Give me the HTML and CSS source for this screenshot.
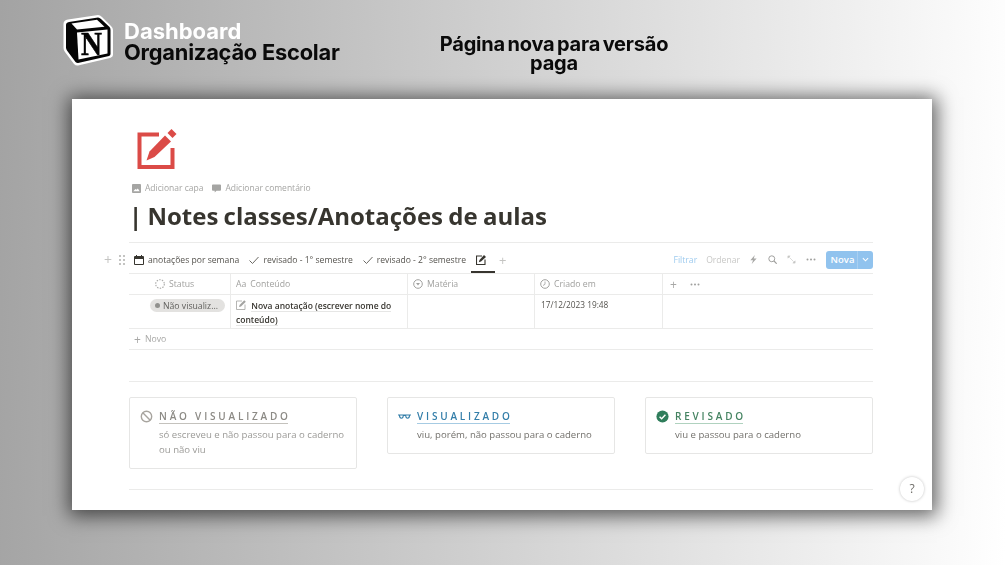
FILE: index.html
```html
<!DOCTYPE html>
<html>
  <head>
    <title>Dashboard Organização Escolar</title>
    <link rel="stylesheet" href="styles.css">
  </head>

  <body>
    <header class="top">
      <svg class="logo" viewBox="0 0 50 52">
        <path d="M5 5.500 L35 1 Q37 1 39 3 L48 12 Q50 14 50 16 V41 Q50 43 47 44 L15 51.500 Q13 52 11 50 L2 38 Q0.500 36 0.500 34 V10 Q0.500 6 5 5.500 Z" fill="#fff"/>
        <path d="M6 8 L35 3.500 Q36.500 3.500 38 5 L46.500 13 Q47.500 14 47.500 16 V40 Q47.500 41.500 46 42 L15 49 Q13.500 49 12.500 48 L4 36.500 Q3 35 3 33.500 V11 Q3 8.500 6 8 Z" fill="#050505"/>
        <path d="M8.500 9.500 L34 5.800 L41.500 12.800 L14 15.500 Z" fill="#fff"/>
        <path d="M14 18.500 L44.500 15.500 V39.500 L15.500 45.500 Z" fill="#fff"/>
        <text class="logo-n" x="28.500" y="41" text-anchor="middle" textLength="21" lengthAdjust="spacingAndGlyphs">N</text>
      </svg>
      <div class="brand">
        <div class="brand-small">Dashboard</div>
        <div class="brand-big">Organização Escolar</div>
      </div>
      <div class="notice">Página nova para versão<br>paga</div>
    </header>

    <main class="window">
      <div class="page">
        <svg class="page-icon" viewBox="0 0 40 42">
          <path d="M22 6.500 H2.500 V39 H35.500 V20" fill="none" stroke="#db4b47" stroke-width="4"/>
          <path d="M28 7.500 L34 13.500 L17.500 29 L9.500 32.500 L12.500 23.500 Z" fill="#db4b47"/>
          <path d="M30.500 5 L34.500 1 L39.500 6 L35.500 10 Z" fill="#db4b47"/>
        </svg>

        <div class="meta">
          <span class="meta-item">
            <svg class="ico-s" viewBox="0 0 10 10"><path d="M0 1 Q0 0 1 0 H9 Q10 0 10 1 V9 Q10 10 9 10 H1 Q0 10 0 9 Z M1.500 8 H8.500 L6.500 5 L5 6.500 L3.800 5.500 Z" fill="#a5a5a3" fill-rule="evenodd"/></svg>
            Adicionar capa
          </span>
          <span class="meta-item">
            <svg class="ico-s" viewBox="0 0 10 10"><path d="M1 0.500 H9 Q10 0.500 10 1.500 V6.500 Q10 7.500 9 7.500 H5 L3 9.500 V7.500 H1 Q0 7.500 0 6.500 V1.500 Q0 0.500 1 0.500 Z" fill="#a5a5a3"/></svg>
            Adicionar comentário
          </span>
        </div>

        <h1 class="title">| Notes classes/Anotações de aulas</h1>

        <div class="tabs">
          <span class="handle">+</span>
          <svg class="grip" viewBox="0 0 6 10"><g fill="#c4c4c2"><rect y="0" width="2" height="2"/><rect x="4" y="0" width="2" height="2"/><rect y="4" width="2" height="2"/><rect x="4" y="4" width="2" height="2"/><rect y="8" width="2" height="2"/><rect x="4" y="8" width="2" height="2"/></g></svg>
          <span class="tab">
            <svg class="ico" viewBox="0 0 10 10"><path d="M0 2 Q0 1 1 1 H2 V0 H3 V1 H7 V0 H8 V1 H9 Q10 1 10 2 V9 Q10 10 9 10 H1 Q0 10 0 9 Z M1 4 V9 H9 V4 Z" fill="#37352f" fill-rule="evenodd"/></svg>
            anotações por semana
          </span>
          <span class="tab">
            <svg class="ico" viewBox="0 0 10 10"><path d="M0.500 5.500 L3.500 8.500 L9.500 2" fill="none" stroke="#6b6964" stroke-width="1"/></svg>
            revisado - 1° semestre
          </span>
          <span class="tab">
            <svg class="ico" viewBox="0 0 10 10"><path d="M0.500 5.500 L3.500 8.500 L9.500 2" fill="none" stroke="#6b6964" stroke-width="1"/></svg>
            revisado - 2° semestre
          </span>
          <span class="tab tab-active">
            <svg class="ico" viewBox="0 0 10 10"><path d="M6 1 H0.500 V9.500 H9 V4.500" fill="none" stroke="#37352f" stroke-width="1.100"/><path d="M8 0 L10 2 L5 6.500 L2.800 7.200 L3.500 5 Z" fill="#37352f"/></svg>
          </span>
          <span class="tab-add">+</span>
          <div class="tools">
            <span class="filter">Filtrar</span>
            <span class="sort">Ordenar</span>
            <svg class="tool" viewBox="0 0 10 10"><path d="M6.500 0 L1.500 5.800 H4.500 L3 10 L8.500 4 H5.300 Z" fill="#a8a8a6"/></svg>
            <svg class="tool" viewBox="0 0 10 10"><circle cx="4.200" cy="4.200" r="3.300" fill="none" stroke="#a0a09e" stroke-width="1.100"/><path d="M6.700 6.700 L9.700 9.700" stroke="#a0a09e" stroke-width="1.300"/></svg>
            <svg class="tool" viewBox="0 0 10 10"><path d="M1 1 H3.500 L1 3.500 Z M9 9 H6.500 L9 6.500 Z M2.500 2.500 L7.500 7.500" fill="#c8c8c6" stroke="#c8c8c6" stroke-width="0.700"/></svg>
            <svg class="dots" viewBox="0 0 10 3"><g fill="#a0a09e"><circle cx="1.500" cy="1.500" r="1"/><circle cx="5" cy="1.500" r="1"/><circle cx="8.500" cy="1.500" r="1"/></g></svg>
            <span class="new-btn"><span class="new-label">Nova</span><svg class="new-arrow" viewBox="0 0 8 5"><path d="M1 1 L4 4 L7 1" fill="none" stroke="#fff" stroke-width="1.200"/></svg></span>
          </div>
        </div>

        <div class="table">
          <div class="row row-head">
            <div class="cell c-status">
              <svg class="ico" viewBox="0 0 10 10"><circle cx="5" cy="5" r="4.300" fill="none" stroke="#a8a8a6" stroke-width="1.100" stroke-dasharray="1.500 1.200"/></svg>
              Status
            </div>
            <div class="cell c-content"><span class="aa">Aa</span> Conteúdo</div>
            <div class="cell c-subject">
              <svg class="ico" viewBox="0 0 10 10"><circle cx="5" cy="5" r="4.300" fill="none" stroke="#a0a09e"/><path d="M3 4 H7 L5 6.500 Z" fill="#a0a09e"/></svg>
              Matéria
            </div>
            <div class="cell c-date">
              <svg class="ico" viewBox="0 0 10 10"><circle cx="5" cy="5" r="4.300" fill="none" stroke="#a0a09e"/><path d="M5 2.500 V5.300 L3 6.500" fill="none" stroke="#a0a09e" stroke-width="0.800"/></svg>
              Criado em
            </div>
            <div class="cell c-rest"><span class="rest-plus">+</span><svg class="dots" viewBox="0 0 10 3"><g fill="#a0a09e"><circle cx="1.500" cy="1.500" r="1"/><circle cx="5" cy="1.500" r="1"/><circle cx="8.500" cy="1.500" r="1"/></g></svg></div>
          </div>
          <div class="row row-item">
            <div class="cell c-status top-align"><span class="pill"><span class="pill-dot"></span>Não visualiz...</span></div>
            <div class="cell c-content top-align">
              <div class="item-text">
                <svg class="ico item-ico" viewBox="0 0 10 10"><path d="M6 1 H0.500 V9.500 H9 V4.500" fill="none" stroke="#a3a3a1" stroke-width="0.800"/><path d="M8.200 0.300 L9.800 1.800 L5 6.500 L3 7.100 L3.600 5 Z" fill="#a3a3a1"/></svg>
                <span class="item-link">Nova anotação (escrever nome do conteúdo)</span>
              </div>
            </div>
            <div class="cell c-subject"></div>
            <div class="cell c-date top-align date-value">17/12/2023 19:48</div>
            <div class="cell c-rest"></div>
          </div>
        </div>
        <div class="add-row"><span class="add-plus">+</span> Novo</div>

        <hr class="rule rule-a">

        <div class="callouts">
          <div class="callout">
            <svg class="callout-ico" viewBox="0 0 12 12"><circle cx="6" cy="6" r="4.800" fill="none" stroke="#a8a59f" stroke-width="1.300"/><path d="M2.600 2.600 L9.400 9.400" stroke="#a8a59f" stroke-width="1.300"/></svg>
            <div class="callout-body">
              <div class="label label-grey">NÃO VISUALIZADO</div>
              <p class="note note-grey">só escreveu e não passou para o caderno ou não viu</p>
            </div>
          </div>
          <div class="callout">
            <svg class="callout-ico" viewBox="0 0 14 12"><path d="M0 3.800 H14 V5 H13 Q12.800 8.500 10.300 8.500 Q8 8.500 7.800 5.500 H6.200 Q6 8.500 3.700 8.500 Q1.200 8.500 1 5 H0 Z M2.200 5 Q2.300 7.300 3.700 7.300 Q5 7.300 5.200 5 Z M8.800 5 Q9 7.300 10.300 7.300 Q11.700 7.300 11.800 5 Z" fill="#337ea9" fill-rule="evenodd"/></svg>
            <div class="callout-body">
              <div class="label label-blue">VISUALIZADO</div>
              <p class="note">viu, porém, não passou para o caderno</p>
            </div>
          </div>
          <div class="callout">
            <svg class="callout-ico" viewBox="0 0 12 12"><circle cx="6" cy="6" r="5.600" fill="#2f7d5b"/><path d="M3.300 6.200 L5.200 8 L8.700 4.300" fill="none" stroke="#fff" stroke-width="1.300"/></svg>
            <div class="callout-body">
              <div class="label label-green">REVISADO</div>
              <p class="note">viu e passou para o caderno</p>
            </div>
          </div>
        </div>

        <hr class="rule rule-b">
      </div>
      <div class="help">?</div>
    </main>
  </body>
</html>
```

FILE: styles.css
```css
html,
body {
  height: 100%;
}

body {
  margin: 0;
  overflow: hidden;
  background: linear-gradient(92deg, #a3a3a3 0%, #ffffff 100%);
  font-family: "Open Sans", sans-serif;
  color: #37352f;
}

.top {
  display: flex;
  align-items: flex-start;
  height: 99px;
  padding: 14px 0 0 63px;
  box-sizing: border-box;
  filter: blur(0.4px);
}

.logo {
  width: 50px;
  height: 52px;
  flex: none;
}

.logo-n {
  font-family: "Liberation Serif", serif;
  font-weight: 700;
  font-size: 33px;
  fill: #050505;
  stroke: #050505;
  stroke-width: 0.5px;
}

.brand {
  margin: 7px 0 0 11px;
  width: 240px;
  font-family: "Inter", sans-serif;
  font-weight: 700;
  line-height: 21px;
  white-space: nowrap;
}

.brand-small {
  font-size: 22px;
  color: #fff;
}

.brand-big {
  font-size: 21.800px;
  color: #0a0a0a;
  letter-spacing: -0.2px;
}

.notice {
  width: 260px;
  margin: 21px 0 0 60px;
  text-align: center;
  font-family: "Inter", sans-serif;
  font-weight: 700;
  font-size: 20px;
  line-height: 19px;
  letter-spacing: -0.2px;
  word-spacing: -2px;
  color: #0a0a0a;
}

.window {
  position: relative;
  width: 860px;
  height: 411px;
  margin-left: 72px;
  background: #fff;
  box-shadow: 1px 2px 18px 4px rgba(0, 0, 0, 0.6);
}

.page {
  padding: 29px 59px 0 57px;
  filter: blur(0.4px);
}

.page-icon {
  display: block;
  width: 40px;
  height: 42px;
  margin-left: 8px;
}

.meta {
  display: flex;
  gap: 9px;
  margin: 12px 0 0 3px;
  font-size: 8.500px;
  line-height: 12px;
  color: #a5a5a3;
}

.meta-item {
  display: flex;
  align-items: center;
  gap: 4px;
}

.ico-s {
  width: 9px;
  height: 9px;
}

.title {
  margin: 5px 0 0;
  font-size: 24px;
  word-spacing: -1px;
  line-height: 34px;
  font-weight: 700;
  color: #37352f;
}

.tabs {
  display: flex;
  align-items: center;
  box-sizing: border-box;
  height: 30px;
  padding-top: 3px;
  margin: 10px 0 0 -28px;
  font-size: 8.600px;
  color: #55534e;
  position: relative;
}

.tabs::before {
  content: "";
  position: absolute;
  left: 28px;
  right: 0;
  top: -1px;
  border-top: 1px solid #ebebea;
}

.handle {
  width: 14px;
  font-size: 14px;
  color: #c4c4c2;
  text-align: center;
}

.grip {
  width: 6px;
  height: 10px;
  margin: 0 9px 0 4px;
}

.tab {
  display: flex;
  align-items: center;
  gap: 4px;
  height: 100%;
  margin-right: 10px;
  white-space: nowrap;
}

.tab-active {
  padding: 0 9px 0 5px;
  margin: 0 0 0 -5px;
  box-shadow: inset 0 -2px 0 #37352f;
}

.tab-add {
  margin-left: 4px;
  font-size: 13px;
  color: #c4c4c2;
}

.ico {
  width: 10px;
  height: 10px;
  flex: none;
}

.tools {
  display: flex;
  align-items: center;
  margin-left: auto;
  gap: 10px;
}

.filter {
  color: #9ecbef;
  margin-right: -1px;
}

.sort {
  color: #c8c8c6;
  margin-right: -1px;
}

.tool {
  width: 9px;
  height: 9px;
}

.dots {
  width: 10px;
  height: 3px;
  flex: none;
}

.new-btn {
  display: flex;
  align-items: center;
  height: 18px;
  width: 47px;
  background: #91c3ee;
  border-radius: 3px;
  color: #fff;
  font-size: 9.500px;
  font-weight: 600;
}

.new-label {
  flex: 1;
  padding-left: 2px;
  text-align: center;
  border-right: 1px solid #a9cff1;
  line-height: 18px;
}

.new-arrow {
  width: 7px;
  height: 5px;
  margin: 0 4px;
}

.table {
  border-top: 1px solid #ebebea;
  border-bottom: 1px solid #ebebea;
}

.row {
  display: flex;
}

.row-head {
  height: 20px;
  border-bottom: 1px solid #ebebea;
  font-size: 8.700px;
  color: #a0a09e;
}

.row-item {
  height: 33px;
  font-size: 8.700px;
}

.cell {
  display: flex;
  align-items: center;
  gap: 4px;
  box-sizing: border-box;
  padding: 0 5px;
  border-right: 1px solid #ebebea;
}

.top-align {
  align-items: flex-start;
  padding-top: 4px;
}

.c-status {
  width: 102px;
  padding-left: 26px;
}

.c-content {
  width: 177px;
}

.c-subject {
  width: 127px;
}

.c-date {
  width: 128px;
}

.c-rest {
  flex: 1;
  border-right: 0;
  gap: 13px;
  padding-left: 7px;
  color: #a8a8a6;
}

.rest-plus {
  font-size: 12px;
}

.row-item .c-status {
  padding-left: 21px;
}

.pill {
  display: flex;
  align-items: center;
  gap: 3px;
  height: 13px;
  width: 75px;
  padding-left: 5px;
  box-sizing: border-box;
  border-radius: 7px;
  background: #e3e2e0;
  color: #5f5e5b;
  white-space: nowrap;
}

.pill-dot {
  width: 5px;
  height: 5px;
  border-radius: 50%;
  background: #91918e;
}

.item-text {
  font-size: 8.500px;
  line-height: 14px;
  font-weight: 600;
  color: #37352f;
}

.item-ico {
  display: inline-block;
  margin-right: 3px;
  vertical-align: -1px;
}

.item-link {
  border-bottom: 1px solid #e6e6e5;
}

.date-value {
  padding-left: 6px;
  font-size: 8.300px;
  color: #55534e;
}

.add-row {
  display: flex;
  align-items: center;
  gap: 4px;
  height: 20px;
  padding-left: 5px;
  font-size: 8.700px;
  color: #a8a8a6;
  border-bottom: 1px solid #ebebea;
}

.add-plus {
  font-size: 12px;
}

.rule {
  margin: 0;
  border: 0;
  border-top: 1px solid #ebebea;
}

.rule-a {
  margin-top: 31px;
}

.rule-b {
  margin-top: 20px;
}

.callouts {
  display: flex;
  align-items: flex-start;
  justify-content: space-between;
  margin-top: 15px;
}

.callout {
  display: flex;
  gap: 6px;
  width: 228px;
  box-sizing: border-box;
  padding: 12px 4px 11px 10px;
  border: 1px solid #e6e6e5;
  border-radius: 2px;
}

.callout-ico {
  width: 13px;
  height: 13px;
  flex: none;
}

.callout-body {
  flex: 1;
}

.label {
  width: fit-content;
  padding-bottom: 1px;
  font-size: 10px;
  line-height: 13px;
  font-weight: 600;
  letter-spacing: 2.800px;
  white-space: nowrap;
  background: linear-gradient(var(--line), var(--line)) 0 100% / calc(100% - 2.800px) 1px no-repeat;
}

.label-grey {
  color: #8c8a85;
  --line: #c4c2bd;
}

.label-blue {
  color: #337ea9;
  --line: #a6cbe3;
}

.label-green {
  color: #448361;
  --line: #b0d2bf;
}

.note {
  margin: 3px 0 0;
  font-size: 9.600px;
  line-height: 15px;
  color: #73716c;
}

.note-grey {
  color: #9b9a97;
}

.help {
  position: absolute;
  right: 8px;
  bottom: 9px;
  width: 24px;
  height: 24px;
  border-radius: 50%;
  background: #fff;
  box-shadow: 0 0 3px rgba(0, 0, 0, 0.25);
  text-align: center;
  line-height: 24px;
  font-size: 12px;
  color: #6f6e69;
}
```
